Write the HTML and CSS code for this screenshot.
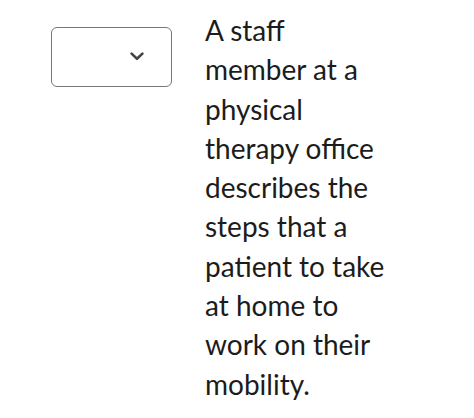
FILE: index.html
```html
<!DOCTYPE html>
<html lang="en">
<head>
  <meta charset="UTF-8" />
  <meta name="viewport" content="width=device-width, initial-scale=1.0"/>
  <title>Matching question</title>
  <link rel="stylesheet" href="styles.css">
</head>
<body>
  <div class="row">
    <div class="select-wrap">
      <select class="answer-select" aria-label="Choose an answer">
        <option value=""></option>
      </select>
      <svg class="chevron" width="14" height="9" viewBox="0 0 14 9" aria-hidden="true">
        <path d="M1.6 1.6 L7 6.8 L12.4 1.6" fill="none" stroke="#444" stroke-width="2.6" stroke-linecap="round" stroke-linejoin="round"/>
      </svg>
    </div>
    <p class="prompt">A staff member at a physical therapy office describes the steps that a patient to take at home to work on their mobility.</p>
  </div>
</body>
</html>
```

FILE: styles.css
```css
body {
  font-family: "Lato", "Liberation Sans", sans-serif;
  background: #fff;
  margin: 0;
  padding: 0;
}

.row {
  display: flex;
  align-items: flex-start;
  padding: 27px 0 0 51px;
}

.select-wrap {
  position: relative;
  width: 121px;
  height: 60px;
  flex-shrink: 0;
}

.answer-select {
  appearance: none;
  -webkit-appearance: none;
  width: 100%;
  height: 100%;
  border: 1px solid #73777b;
  border-radius: 6px;
  background: #fff;
  font-family: inherit;
  font-size: 1rem;
  margin: 0;
}

.chevron {
  position: absolute;
  left: 79px;
  top: 25px;
  pointer-events: none;
}

.prompt {
  width: 184px;
  margin: -16px 0 0 33px;
  font-size: 28px;
  line-height: 39.3px;
  color: #1c1c1c;
}
```
